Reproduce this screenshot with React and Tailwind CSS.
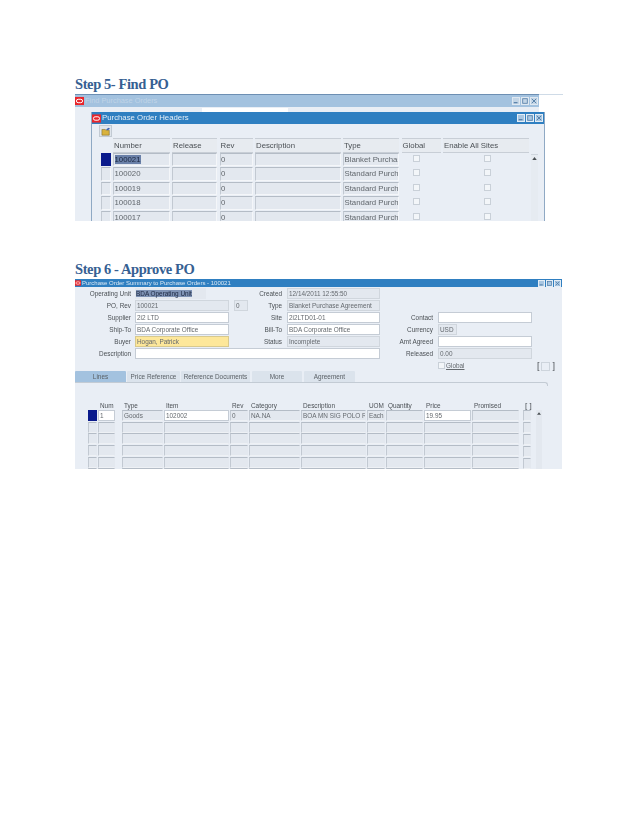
const sans = { fontFamily: '"Liberation Sans", Arial, sans-serif' };

function OracleLogo({ className }) {
  return (
    <svg viewBox="0 0 10 9" className={className}>
      <rect width="10" height="9" fill="#e8252b" />
      <rect x="1.6" y="2.6" width="6.8" height="3.8" rx="1.9" fill="none" stroke="#fff" strokeWidth="1.1" />
    </svg>
  );
}

function WinButtons({ tone, size }) {
  const c = tone === 'light' ? 'bg-[#c3d5e6] border-[#dfe8f1]' : 'bg-[#a9c7e2] border-[#e4edf5]';
  return (
    <div className="flex gap-[1px] items-center">
      {['m', 'r', 'x'].map((k) => (
        <div key={k} className={`${size} ${c} border flex items-center justify-center`}>
          <svg viewBox="0 0 8 8" className="w-full h-full">
            {k === 'm' && <rect x="1" y="5.5" width="5" height="1.5" fill="#4f79a3" />}
            {k === 'r' && <rect x="1" y="1" width="6" height="6" fill="none" stroke="#4f79a3" strokeWidth="1" />}
            {k === 'x' && <path d="M1 1L7 7M7 1L1 7" stroke="#4f79a3" strokeWidth="1.2" />}
          </svg>
        </div>
      ))}
    </div>
  );
}

function Check({ className = '' }) {
  return <div className={`w-[7px] h-[7px] bg-[#f3f6f9] border border-[#c9d0d8] ${className}`} />;
}

function Field1({ children, ind }) {
  const bg = ind === 'on' ? 'bg-[#0a1a8c] border-[#0a1a8c]' : 'bg-[#e3e8ef] border-t-[#b4bcc6] border-l-[#c2c9d2] border-r-[#f4f6f9] border-b-[#f4f6f9]';
  return (
    <div className={`h-[13.5px] mr-[2.5px] border overflow-hidden whitespace-nowrap pl-[0.5px] text-[7.8px] leading-[12px] text-[#60666c] ${bg}`}>
      {children}
    </div>
  );
}

function FindRow({ on, number, release = '', rev, type }) {
  return (
    <>
      <Field1 ind={on ? 'on' : 'off'} />
      <Field1>
        {on ? <span className="bg-[#6a80a8] text-[#1b2740]">{number}</span> : number}
      </Field1>
      <Field1>{release}</Field1>
      <Field1>{rev}</Field1>
      <Field1 />
      <Field1>{type}</Field1>
      <div className="flex justify-center pr-[12px] pt-[2px]"><Check /></div>
      <div className="flex justify-center pt-[2px]"><Check /></div>
    </>
  );
}

function Head1({ children }) {
  return (
    <div className="h-[14.6px] mr-[2.5px] bg-[#e7ebf0] border-t border-t-[#c8ced6] border-b border-b-[#c8ced6] pl-[1px] text-[7.8px] leading-[13px] text-[#4b5055] whitespace-nowrap">
      {children}
    </div>
  );
}

function FindWindow() {
  const rows = [
    { on: true, number: '100021', rev: '0', type: 'Blanket Purchas' },
    { number: '100020', rev: '0', type: 'Standard Purch' },
    { number: '100019', rev: '0', type: 'Standard Purch' },
    { number: '100018', rev: '0', type: 'Standard Purch' },
    { number: '100017', rev: '0', type: 'Standard Purch' },
  ];
  return (
    <div className="flex items-start">
      <div className="w-[464px] h-[127px] bg-[#e9eef5] border-t border-t-[#6d8fb3]">
        <div className="h-[12px] bg-[#a3c2df] flex items-center justify-between pr-[1px]">
          <div className="flex items-center gap-[1px]">
            <OracleLogo className="w-[9px] h-[10px]" />
            <span className="text-[7.4px] text-[#c0d4e7]">Find Purchase Orders</span>
          </div>
          <WinButtons tone="light" size="w-[8px] h-[8px]" />
        </div>
        <div className="h-[5px] ml-[127px] w-[86px] flex items-end">
          <div className="w-full h-[4px] bg-white" />
        </div>
        <div className="ml-[16px] w-[454px] h-[109px] bg-[#e9eef5] border-x border-x-[#8fa9c4] overflow-hidden">
          <div className="h-[12px] bg-[#2f7fc1] flex items-center justify-between pr-[1px]">
            <div className="flex items-center gap-[1px]">
              <OracleLogo className="w-[9px] h-[9px]" />
              <span className="text-[7.8px] text-[#e4eef7]">Purchase Order Headers</span>
            </div>
            <WinButtons size="w-[8px] h-[8px]" />
          </div>
          <div className="h-[14px] pl-[7px] pt-[1px]">
            <div className="w-[13px] h-[12px] bg-[#dfe5ec] border border-[#c2cad3] flex items-center justify-center">
              <svg viewBox="0 0 12 11" className="w-[10px] h-[9px]">
                <path d="M1 3h4l1 1h4v6H1z" fill="#d9b23c" stroke="#6e5a1e" strokeWidth="0.6" />
                <path d="M6 3l3-2 2 1-3 2z" fill="#3a62b5" />
              </svg>
            </div>
          </div>
          <div className="flex pl-[9px]">
            <div className="grid grid-cols-[12px_59px_47.5px_35.5px_88px_58.5px_41.5px_88px] auto-rows-[14.55px] w-[430px]">
              <div />
              <Head1>Number</Head1>
              <Head1>Release</Head1>
              <Head1>Rev</Head1>
              <Head1>Description</Head1>
              <Head1>Type</Head1>
              <Head1>Global</Head1>
              <Head1>Enable All Sites</Head1>
              {rows.map((r) => <FindRow key={r.number} {...r} />)}
            </div>
            <div className="w-[7px] mt-[16px] h-[70px] bg-[#e6ebf1] flex flex-col items-center pt-[2px] border-t border-t-[#cfd6de]">
              <svg viewBox="0 0 6 4" className="w-[5px] h-[3px]"><path d="M0 4L3 0L6 4z" fill="#4b5055" /></svg>
            </div>
          </div>
        </div>
      </div>
      <div className="w-[24px] h-[1px] bg-[#cfdbe7]" />
    </div>
  );
}

function Label({ children }) {
  return <div className="text-right text-[6.4px] leading-[11px] text-[#4b5055] whitespace-nowrap overflow-hidden">{children}</div>;
}

function Input({ children, tone = 'grey', className = '' }) {
  const tones = {
    grey: 'bg-[#e3e8ef] border-[#d0d6dd]',
    white: 'bg-white border-[#c5ccd5]',
    yellow: 'bg-[#fde79a] border-[#d8c98d]',
  };
  return (
    <div className={`h-[11px] border ${tones[tone]} pl-[1px] text-[6.4px] leading-[9px] text-[#64696e] whitespace-nowrap overflow-hidden ${className}`}>
      {children}
    </div>
  );
}

function Tab({ children, active, w }) {
  return (
    <div className={`${w} h-[11px] rounded-t-[1px] text-center text-[6.4px] leading-[11px] text-[#5a6066] whitespace-nowrap overflow-hidden ${active ? 'bg-[#a3c2df]' : 'bg-[#dbe3ec]'}`}>
      {children}
    </div>
  );
}

function Cell2({ children, tone = 'grey', on, className = 'mr-[1px]' }) {
  const bg = on
    ? 'bg-[#0a1a8c] border-[#0a1a8c]'
    : tone === 'white'
      ? 'bg-white border-[#c5ccd5]'
      : 'bg-[#e3e8ef] border-t-[#b4bcc6] border-l-[#c2c9d2] border-r-[#e3e8ef] border-b-[#eef1f5]';
  return (
    <div className={`h-[11px] border pl-[1px] text-[6.4px] leading-[9px] text-[#64696e] whitespace-nowrap overflow-hidden ${className} ${bg}`}>
      {children}
    </div>
  );
}

function Head2({ children, className = '' }) {
  return <div className={`pl-[2px] text-[6.4px] leading-[8px] text-[#4b5055] whitespace-nowrap ${className}`}>{children}</div>;
}

function ApproveWindow() {
  const heads = ['Num', 'Type', 'Item', 'Rev', 'Category', 'Description', 'UOM', 'Quantity', 'Price', 'Promised'];
  const empty = [0, 1, 2, 3, 4];
  return (
    <div className="w-[487px] h-[190px] bg-[#e9eef5] overflow-hidden">
      <div className="h-[8px] bg-[#2f7fc1] flex items-center justify-between pr-[1px]">
        <div className="flex items-center gap-[1px]">
          <OracleLogo className="w-[6px] h-[8px]" />
          <span className="text-[6px] text-[#dbe8f3]">Purchase Order Summary to Purchase Orders - 100021</span>
        </div>
        <WinButtons size="w-[7px] h-[7px]" />
      </div>
      <div className="grid grid-cols-[56px_98px_19px_34px_98px_53px_99px] auto-rows-[12px] pt-[1px]">
        <Label>Operating Unit</Label>
        <div className="pl-[4px]">
          <div className="w-[71px] h-[11px] bg-[#e3e8ef] text-[6.4px] leading-[11px] text-[#1b2740] whitespace-nowrap pl-[1px]">
            <span className="bg-[#7f93b5]">BDA Operating Unit</span>
          </div>
        </div>
        <div />
        <Label>Created</Label>
        <div className="pl-[5px]"><Input>12/14/2011 12:55:50</Input></div>
        <div />
        <div />

        <Label>PO, Rev</Label>
        <div className="pl-[4px]"><Input>100021</Input></div>
        <div className="pl-[5px]"><Input>0</Input></div>
        <Label>Type</Label>
        <div className="pl-[5px]"><Input>Blanket Purchase Agreement</Input></div>
        <div />
        <div />

        <Label>Supplier</Label>
        <div className="pl-[4px]"><Input tone="white">2i2 LTD</Input></div>
        <div />
        <Label>Site</Label>
        <div className="pl-[5px]"><Input tone="white">2i2LTD01-01</Input></div>
        <Label>Contact</Label>
        <div className="pl-[5px]"><Input tone="white" /></div>

        <Label>Ship-To</Label>
        <div className="pl-[4px]"><Input tone="white">BDA Corporate Office</Input></div>
        <div />
        <Label>Bill-To</Label>
        <div className="pl-[5px]"><Input tone="white">BDA Corporate Office</Input></div>
        <Label>Currency</Label>
        <div className="pl-[5px]"><Input className="w-[19px]">USD</Input></div>

        <Label>Buyer</Label>
        <div className="pl-[4px]"><Input tone="yellow">Hogan, Patrick</Input></div>
        <div />
        <Label>Status</Label>
        <div className="pl-[5px]"><Input>Incomplete</Input></div>
        <Label>Amt Agreed</Label>
        <div className="pl-[5px]"><Input tone="white" /></div>

        <Label>Description</Label>
        <div className="col-span-4 pl-[4px]"><Input tone="white" /></div>
        <Label>Released</Label>
        <div className="pl-[5px]"><Input>0.00</Input></div>

        <div className="col-span-6" />
        <div className="pl-[5px] flex items-center justify-between">
          <div className="flex items-center gap-[1px]">
            <Check className="w-[6px] h-[6px]" />
            <span className="text-[6.4px] text-[#64696e] underline">Global</span>
          </div>
          <div className="flex items-center gap-[2px] text-[9px] leading-none text-[#4b5055] -mr-[23px]">
            <span>[</span>
            <div className="w-[9px] h-[9px] bg-[#e9eef5] border border-[#cdd4dc]" />
            <span>]</span>
          </div>
        </div>
      </div>
      <div className="flex gap-[1px] -mt-[1px]">
        <Tab active w="w-[51px]">Lines</Tab>
        <Tab w="w-[53px]">Price Reference</Tab>
        <Tab w="w-[69px]">Reference Documents</Tab>
        <Tab w="w-[50px] ml-[1px]">More</Tab>
        <Tab w="w-[51px] ml-[1px]">Agreement</Tab>
      </div>
      <div className="flex">
        <div className="h-[88px] pt-[19px] pl-[13px] flex border-t border-[#c3cbd4] w-[470px]">
          <div>
            <div className="grid grid-cols-[10px_24px_42px_66px_19px_52px_66px_19px_38px_48px_48px] grid-rows-[8px] auto-rows-[11.7px] w-[432px]">
              <div />
              {heads.map((h) => <Head2 key={h}>{h}</Head2>)}
              <Cell2 on />
              <Cell2 tone="white" className="mr-[7px]">1</Cell2>
              <Cell2>Goods</Cell2>
              <Cell2 tone="white">102002</Cell2>
              <Cell2>0</Cell2>
              <Cell2>NA.NA</Cell2>
              <Cell2>BOA MN SIG POLO R</Cell2>
              <Cell2>Each</Cell2>
              <Cell2 />
              <Cell2 tone="white">19.95</Cell2>
              <Cell2 />
              {empty.map((r) => (
                <div key={r} className="contents">
                  {[0, 1, 2, 3, 4, 5, 6, 7, 8, 9, 10].map((c) => (
                    <Cell2 key={c} className={c === 1 ? 'mr-[7px]' : 'mr-[1px]'} />
                  ))}
                </div>
              ))}
            </div>
          </div>
          <div className="ml-[3px] w-[9px]">
            <Head2 className="pl-0 text-[8px]">[ ]</Head2>
            <div className="flex flex-col gap-[1px]">
              {empty.map((r) => <Cell2 key={r} />)}
            </div>
          </div>
          <div className="ml-[4px] mt-[8px] w-[6px] h-[60px] bg-[#e3e8ef] flex flex-col items-center pt-[2px]">
            <svg viewBox="0 0 6 4" className="w-[4px] h-[3px]"><path d="M0 4L3 0L6 4z" fill="#4b5055" /></svg>
          </div>
        </div>
        <div className="w-[3px] h-[4px] border-t border-r border-[#c3cbd4] rounded-tr-[3px]" />
      </div>
    </div>
  );
}

function Heading({ children, className = '' }) {
  return (
    <h2
      className={`font-bold text-[14.5px] leading-[20px] text-[#366092] tracking-[-0.4px] ${className}`}
      style={{ fontFamily: '"Liberation Serif", serif' }}
    >
      {children}
    </h2>
  );
}

export default function App() {
  return (
    <div className="w-[638px] h-[826px] bg-white overflow-hidden pl-[75px] pt-[74px]" style={sans}>
      <Heading>Step 5- Find PO</Heading>
      <div className="blur-[0.4px]"><FindWindow /></div>
      <Heading className="mt-[38px]">Step 6 - Approve PO</Heading>
      <div className="blur-[0.4px]"><ApproveWindow /></div>
    </div>
  );
}
